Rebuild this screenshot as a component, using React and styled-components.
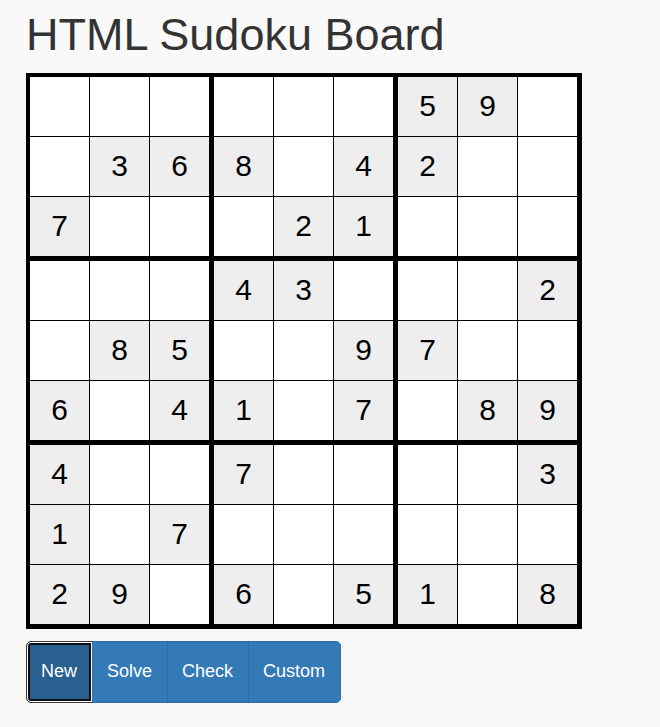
import styled, { createGlobalStyle } from "styled-components";

const GlobalStyle = createGlobalStyle`
  html, body {
    margin: 0;
    padding: 0;
    background: #f9f9f9;
    font-family: "Liberation Sans", Arial, sans-serif;
  }
`;

const Page = styled.div`
  padding: 0 26px;
`;

const Title = styled.h1`
  margin: 10px 0 13px;
  font-size: 45px;
  line-height: 1.1;
  font-weight: 400;
  color: #333;
`;

const Board = styled.div`
  display: inline-grid;
  grid-template-columns: repeat(9, auto);
  gap: 1px;
  background: #000;
  border-style: solid;
  border-color: #000;
  border-width: 4px 5px 5px 4px;
`;

const Cell = styled.div`
  width: 59px;
  height: 59px;
  display: flex;
  align-items: center;
  justify-content: center;
  font-size: 30px;
  color: #000;
  background: ${(p) => (p.$given ? "#eeeeee" : "#ffffff")};
  border-right: ${(p) => (p.$boxRight ? "4px solid #000" : "none")};
  border-bottom: ${(p) => (p.$boxBottom ? "4px solid #000" : "none")};
`;

const ButtonGroup = styled.div`
  display: inline-flex;
  margin-top: 12px;
`;

const Button = styled.button`
  font-family: "Liberation Sans", Arial, sans-serif;
  font-size: 18px;
  line-height: 24px;
  color: #fff;
  padding: 17px 15px 19px 14px;
  background: ${(p) => (p.$active ? "#286090" : "#337ab7")};
  border: 1px solid ${(p) => (p.$active ? "#3a3a3a" : "#2e6da4")};
  box-shadow: ${(p) =>
    p.$active ? "inset 0 0 0 1px #fff, inset 0 0 0 3px #111" : "none"};
  border-radius: 0;
  margin-left: -1px;
  cursor: pointer;

  &:first-child {
    margin-left: 0;
    border-radius: 5px 0 0 5px;
  }
  &:last-child {
    border-radius: 0 5px 5px 0;
  }
`;

const puzzle = [
  "000000590",
  "036804200",
  "700021000",
  "000430002",
  "085009700",
  "604107089",
  "400700003",
  "107000000",
  "290605108",
];

export default function App() {
  return (
    <Page>
      <GlobalStyle />
      <Title>HTML Sudoku Board</Title>
      <div>
        <Board>
          {puzzle.map((row, r) =>
            row.split("").map((ch, c) => (
              <Cell
                key={`${r}-${c}`}
                $given={ch !== "0"}
                $boxRight={c === 2 || c === 5}
                $boxBottom={r === 2 || r === 5}
              >
                {ch !== "0" ? ch : ""}
              </Cell>
            ))
          )}
        </Board>
      </div>
      <ButtonGroup>
        <Button $active>New</Button>
        <Button>Solve</Button>
        <Button>Check</Button>
        <Button>Custom</Button>
      </ButtonGroup>
    </Page>
  );
}
